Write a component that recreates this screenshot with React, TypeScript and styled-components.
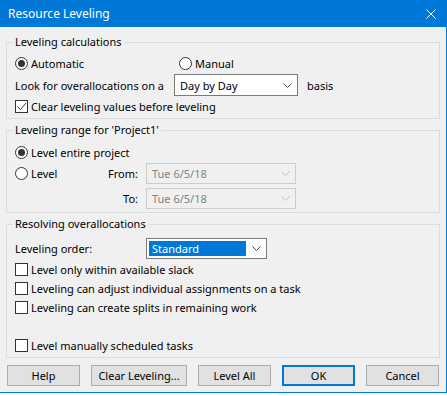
import React from 'react'
import styled, { createGlobalStyle } from 'styled-components'

const GlobalStyle = createGlobalStyle`
    html, body {
        margin: 0;
        padding: 0;
        background: #ffffff;
    }
    body {
        font-family: 'Noto Sans', 'Segoe UI', sans-serif;
        font-size: 11px;
        color: #000000;
    }
`

interface RadioProps {
    checked?: boolean
    label: string
}

const Radio: React.FC<RadioProps> = ({ checked = false, label }) => (
    <OptionLabel>
        <RadioCircle>{checked && <RadioDot />}</RadioCircle>
        {label}
    </OptionLabel>
)

interface CheckProps {
    checked?: boolean
    label: string
}

const Check: React.FC<CheckProps> = ({ checked = false, label }) => (
    <OptionLabel>
        <CheckSquare>
            {checked && (
                <svg width='11' height='11' viewBox='0 0 11 11'>
                    <polyline points='1.5,5.5 4.5,8.5 10,2' fill='none' stroke='#333' strokeWidth='1' />
                </svg>
            )}
        </CheckSquare>
        {label}
    </OptionLabel>
)

interface ComboProps {
    value: string
    width: number
    height?: number
    disabled?: boolean
    selected?: boolean
}

const Combo: React.FC<ComboProps> = ({ value, width, height = 21, disabled = false, selected = false }) => (
    <ComboFrame $w={width} $h={height} $disabled={disabled}>
        <ComboText $selected={selected} $disabled={disabled}>{value}</ComboText>
        <ComboArrow>
            <svg width='9' height='5' viewBox='0 0 9 5'>
                <polyline points='0.5,0.5 4.5,4.5 8.5,0.5' fill='none' stroke={disabled ? '#bfbfbf' : '#444'} strokeWidth='1' />
            </svg>
        </ComboArrow>
    </ComboFrame>
)

const App: React.FC = () => {
    return (
        <>
            <GlobalStyle />
            <Window>
                <TitleBar>
                    <span>Resource Leveling</span>
                    <svg width='10' height='10' viewBox='0 0 10 10'>
                        <path d='M0.5 0.5 L9.5 9.5 M9.5 0.5 L0.5 9.5' stroke='#fff' strokeWidth='1' />
                    </svg>
                </TitleBar>
                <Body>
                    <GroupBox $top={0} $bottom={4}>
                        <Legend>Leveling calculations</Legend>
                        <Row $top={5} $h={16}>
                            <Cell $w={164}><Radio checked label='Automatic' /></Cell>
                            <Radio label='Manual' />
                        </Row>
                        <Row $top={3} $h={22}>
                            <Cell $w={159}>Look for overallocations on a</Cell>
                            <Combo value='Day by Day' width={124} height={22} />
                            <Suffix>basis</Suffix>
                        </Row>
                        <Row $top={2} $h={16}>
                            <Check checked label='Clear leveling values before leveling' />
                        </Row>
                    </GroupBox>

                    <GroupBox $top={3} $bottom={3}>
                        <Legend>Leveling range for 'Project1'</Legend>
                        <Row $top={6} $h={16}>
                            <Radio checked label='Level entire project' />
                        </Row>
                        <Row $top={3} $h={21}>
                            <Cell $w={93}><Radio label='Level' /></Cell>
                            <FieldLabel>From:</FieldLabel>
                            <Combo value='Tue 6/5/18' width={150} disabled />
                        </Row>
                        <Row $top={4} $h={21}>
                            <Cell $w={93} />
                            <FieldLabel>To:</FieldLabel>
                            <Combo value='Tue 6/5/18' width={150} disabled />
                        </Row>
                    </GroupBox>

                    <GroupBox $top={3} $bottom={2}>
                        <Legend>Resolving overallocations</Legend>
                        <Row $top={6} $h={21}>
                            <Cell $w={131}>Leveling order:</Cell>
                            <Combo value='Standard' width={121} selected />
                        </Row>
                        <Row $top={1} $h={19}>
                            <Check label='Level only within available slack' />
                        </Row>
                        <Row $top={0} $h={19}>
                            <Check label='Leveling can adjust individual assignments on a task' />
                        </Row>
                        <Row $top={0} $h={19}>
                            <Check label='Leveling can create splits in remaining work' />
                        </Row>
                        <Row $top={19} $h={19}>
                            <Check label='Level manually scheduled tasks' />
                        </Row>
                    </GroupBox>

                    <ButtonBar>
                        <Button $w={73}>Help</Button>
                        <Button $w={96}>Clear Leveling...</Button>
                        <Button $w={73}>Level All</Button>
                        <Button $w={73} $default>OK</Button>
                        <Button $w={73}>Cancel</Button>
                    </ButtonBar>
                </Body>
            </Window>
        </>
    )
}

const Window = styled.div`
    width: 446px;
    height: 392px;
    background: #f0f0f0;
    border-right: 1px solid #0078d7;
    border-bottom: 1px solid #0078d7;
    display: flex;
    flex-direction: column;
`

const TitleBar = styled.div`
    height: 27px;
    flex-shrink: 0;
    background: #0078d7;
    color: #ffffff;
    font-size: 12px;
    display: flex;
    align-items: center;
    justify-content: space-between;
    padding: 0 10px 0 8px;
`

const Body = styled.div`
    padding: 7px 6px 0;
    display: flex;
    flex-direction: column;
`

const GroupBox = styled.fieldset<{ $top: number; $bottom: number }>`
    margin: ${p => p.$top}px 0 0;
    padding: 0 0 ${p => p.$bottom}px 8px;
    border: 1px solid #dcdcdc;
    min-width: 0;
`

const Legend = styled.legend`
    padding: 0 2px;
    margin-left: -2px;
    line-height: 16px;
    height: 16px;
`

const Row = styled.div<{ $top: number; $h: number }>`
    display: flex;
    align-items: center;
    margin-top: ${p => p.$top}px;
    height: ${p => p.$h}px;
`

const Cell = styled.div<{ $w: number }>`
    width: ${p => p.$w}px;
    flex-shrink: 0;
    display: flex;
    align-items: center;
`

const FieldLabel = styled.span`
    width: 30px;
    text-align: right;
    margin-right: 8px;
`

const Suffix = styled.span`
    margin-left: 9px;
`

const OptionLabel = styled.label`
    display: flex;
    align-items: center;
    gap: 3px;
    white-space: nowrap;
`

const RadioCircle = styled.span`
    width: 13px;
    height: 13px;
    box-sizing: border-box;
    border: 1px solid #333333;
    border-radius: 50%;
    background: #ffffff;
    display: flex;
    align-items: center;
    justify-content: center;
    flex-shrink: 0;
`

const RadioDot = styled.span`
    width: 7px;
    height: 7px;
    border-radius: 50%;
    background: #333333;
`

const CheckSquare = styled.span`
    width: 13px;
    height: 13px;
    box-sizing: border-box;
    border: 1px solid #333333;
    background: #ffffff;
    display: flex;
    align-items: center;
    justify-content: center;
    flex-shrink: 0;
`

const ComboFrame = styled.div<{ $w: number; $h: number; $disabled: boolean }>`
    width: ${p => p.$w}px;
    height: ${p => p.$h}px;
    box-sizing: border-box;
    border: 1px solid ${p => (p.$disabled ? '#cccccc' : '#7a7a7a')};
    background: ${p => (p.$disabled ? '#f0f0f0' : '#ffffff')};
    display: flex;
    align-items: center;
    flex-shrink: 0;
`

const ComboText = styled.span<{ $selected: boolean; $disabled: boolean }>`
    flex: 1;
    height: 15px;
    line-height: 15px;
    margin-left: 2px;
    padding-left: 3px;
    background: ${p => (p.$selected ? '#0078d7' : 'transparent')};
    color: ${p => (p.$selected ? '#ffffff' : p.$disabled ? '#838383' : '#000000')};
    white-space: nowrap;
`

const ComboArrow = styled.span`
    width: 20px;
    display: flex;
    align-items: center;
    justify-content: center;
`

const ButtonBar = styled.div`
    display: flex;
    gap: 11px;
    margin-top: 7px;
    padding-left: 1px;
`

const Button = styled.button<{ $w: number; $default?: boolean }>`
    width: ${p => p.$w}px;
    height: 21px;
    box-sizing: border-box;
    padding: 0;
    font: inherit;
    color: #000000;
    background: #e1e1e1;
    border: ${p => (p.$default ? '2px solid #0078d7' : '1px solid #adadad')};
`

export default App
